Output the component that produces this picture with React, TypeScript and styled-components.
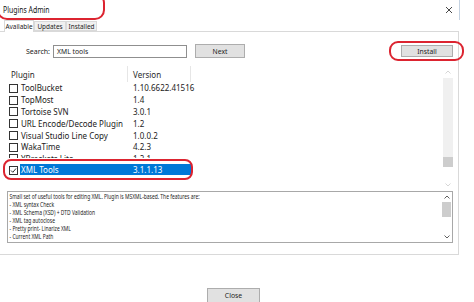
import styled, { createGlobalStyle } from "styled-components";

const GlobalStyle = createGlobalStyle`
    html, body {
        margin: 0;
        padding: 0;
        background: #ffffff;
    }
    body {
        font-family: "Noto Sans", "Open Sans", sans-serif;
        color: #1b1b1b;
    }
`;

const Window = styled.div`
    position: relative;
    width: 474px;
    height: 302px;
    overflow: hidden;
    background: #ffffff;
    display: flex;
    flex-direction: column;
`;

const TitleBar = styled.header`
    box-sizing: border-box;
    width: 460px;
    height: 20px;
    flex: none;
    display: flex;
    align-items: center;
    justify-content: space-between;
    padding: 0 7px 0 3px;
    border-right: 1px solid #c5d3e2;
`;

const Title = styled.h1`
    margin: 0;
    width: 48px;
    font-size: 8.6px;
    line-height: 10px;
    font-weight: 400;
    color: #111;
    white-space: nowrap;
    transform: scaleX(0.8);
    transform-origin: left center;
`;

const Marked = styled.div`
    position: relative;
    display: inline-flex;
`;

/* red hand-drawn highlight that lies over the screenshot */
const Ring = styled.span<{ $inset: string; $radius: number }>`
    position: absolute;
    inset: ${(p) => p.$inset};
    border: 2px solid #dc2430;
    border-radius: ${(p) => p.$radius}px;
    pointer-events: none;
`;

const TabStrip = styled.nav`
    display: flex;
    align-items: flex-end;
    height: 11px;
    padding-left: 4px;
    flex: none;
`;

const Tab = styled.div<{ $active?: boolean; $width: number }>`
    box-sizing: border-box;
    width: ${(p) => p.$width}px;
    height: ${(p) => (p.$active ? 12 : 10)}px;
    margin-bottom: ${(p) => (p.$active ? -1 : 0)}px;
    display: flex;
    align-items: center;
    justify-content: center;
    font-size: 6.4px;
    color: #222;
    white-space: nowrap;
    background: ${(p) => (p.$active ? "#ffffff" : "#f0f0f0")};
    border: 1px solid #d9d9d9;
    border-bottom: ${(p) => (p.$active ? "none" : "1px solid #d9d9d9")};
    z-index: ${(p) => (p.$active ? 1 : 0)};
`;

const Panel = styled.section`
    box-sizing: border-box;
    width: 459px;
    height: 224px;
    flex: none;
    display: flex;
    flex-direction: column;
    border-top: 1px solid #d9d9d9;
    border-right: 1px solid #d9d9d9;
    border-bottom: 1px solid #d9d9d9;
`;

const SearchRow = styled.div`
    display: flex;
    align-items: center;
    height: 14px;
    margin-top: 12px;
    padding-right: 5px;
`;

const Label = styled.label`
    width: 50px;
    text-align: right;
    margin-right: 3px;
    font-size: 7px;
`;

const Input = styled.div`
    box-sizing: border-box;
    width: 134px;
    height: 13px;
    border: 1px solid #8f8f8f;
    padding-left: 3px;
    font-size: 6.8px;
    display: flex;
    align-items: center;
`;

const Button = styled.button<{ $width: number; $height: number }>`
    box-sizing: border-box;
    width: ${(p) => p.$width}px;
    height: ${(p) => p.$height}px;
    padding: 0;
    margin: 0;
    background: #e1e1e1;
    border: 1px solid #adadad;
    font-family: inherit;
    font-size: 6.8px;
    color: #222;
    display: flex;
    align-items: center;
    justify-content: center;
`;

const Spacer = styled.div`
    flex: 1;
`;

const List = styled.div`
    display: flex;
    width: 450px;
    height: 124px;
    margin: 8px 0 0 5px;
`;

const Table = styled.div`
    flex: 1;
    display: flex;
    flex-direction: column;
    font-size: 8px;
`;

const HeaderRow = styled.div`
    display: grid;
    grid-template-columns: 123px 63px;
    height: 16px;
`;

const HeaderCell = styled.div<{ $pad: number }>`
    display: flex;
    align-items: center;
    padding-left: ${(p) => p.$pad}px;
    border-right: 1px solid #e6e6e6;
    color: #2a2a2a;
`;

const Row = styled.div<{ $clip?: number }>`
    display: grid;
    grid-template-columns: 15px 108px 63px;
    height: ${(p) => p.$clip ?? 11.8}px;
    align-items: ${(p) => (p.$clip ? "start" : "center")};
    overflow: hidden;
    flex: none;
`;

const Cell = styled.div<{ $selected?: boolean; $pad: number }>`
    height: 11px;
    line-height: 11px;
    padding-left: ${(p) => p.$pad}px;
    white-space: nowrap;
    background: ${(p) => (p.$selected ? "#0078d7" : "transparent")};
    color: ${(p) => (p.$selected ? "#ffffff" : "#1b1b1b")};
`;

const Check = styled.span`
    box-sizing: border-box;
    width: 9px;
    height: 9px;
    margin: 1px 0 0 4px;
    border: 1px solid #333;
    background: #fff;
    display: flex;
    align-items: center;
    justify-content: center;
`;

const ScrollColumn = styled.div<{ $width: number; $right: number }>`
    width: ${(p) => p.$width}px;
    margin-right: ${(p) => p.$right}px;
    display: flex;
    flex-direction: column;
    align-items: center;
`;

const Arrow = styled.div<{ $height: number; $faint?: boolean }>`
    height: ${(p) => p.$height}px;
    display: flex;
    align-items: center;
    justify-content: center;
    opacity: ${(p) => (p.$faint ? 0.25 : 1)};
`;

const Track = styled.div<{ $height: number; $bare?: boolean }>`
    width: 100%;
    height: ${(p) => p.$height}px;
    background: ${(p) => (p.$bare ? "transparent" : "#f0f0f0")};
    display: flex;
    flex-direction: column;
`;

const Thumb = styled.div<{ $top: number; $height: number }>`
    margin-top: ${(p) => p.$top}px;
    height: ${(p) => p.$height}px;
    background: #cdcdcd;
`;

const Description = styled.div`
    box-sizing: border-box;
    display: flex;
    width: 446px;
    height: 52px;
    margin: 1px 0 0 7px;
    border: 1px solid #a8a8a8;
    overflow: hidden;
`;

const DescText = styled.div`
    flex: 1;
    padding: 1px 0 0 2px;
    font-size: 6.6px;
    line-height: 8px;
    color: #1b1b1b;
    white-space: nowrap;
    transform: scaleX(0.75);
    transform-origin: left top;
`;

const Footer = styled.footer`
    display: flex;
    padding: 33px 0 0 207px;
`;

type Plugin = { name: string; version: string };

const plugins: Plugin[] = [
    { name: "ToolBucket", version: "1.10.6622.41516" },
    { name: "TopMost", version: "1.4" },
    { name: "Tortoise SVN", version: "3.0.1" },
    { name: "URL Encode/Decode Plugin", version: "1.2" },
    { name: "Visual Studio Line Copy", version: "1.0.0.2" },
    { name: "WakaTime", version: "4.2.3" },
];

const descLines = [
    "Small set of useful tools for editing XML. Plugin is MSXML-based. The features are:",
    "- XML syntax Check",
    "- XML Schema (XSD) + DTD Validation",
    "- XML tag autoclose",
    "- Pretty print- Linarize XML",
    "- Current XML Path",
];

function Chevron({ up }: { up?: boolean }) {
    return (
        <svg width="6" height="4" viewBox="0 0 6 4">
            <path d={up ? "M0.5 3.5 L3 1 L5.5 3.5" : "M0.5 0.5 L3 3 L5.5 0.5"} fill="none" stroke="#606060" strokeWidth="1" />
        </svg>
    );
}

export default function App() {
    return (
        <Window>
            <GlobalStyle />
            <TitleBar>
                <Marked>
                    <Title>Plugins Admin</Title>
                    <Ring $inset="-12px -54px -5px -6px" $radius={10} />
                </Marked>
                <svg width="6" height="6" viewBox="0 0 6 6">
                    <path d="M0 0 L6 6 M6 0 L0 6" stroke="#333" strokeWidth="0.9" />
                </svg>
            </TitleBar>

            <TabStrip>
                <Tab $active $width={30}>Available</Tab>
                <Tab $width={32}>Updates</Tab>
                <Tab $width={31}>Installed</Tab>
            </TabStrip>

            <Panel>
                <SearchRow>
                    <Label>Search:</Label>
                    <Input>XML tools</Input>
                    <Button $width={50} $height={14} style={{ marginLeft: 8 }}>
                        Next
                    </Button>
                    <Spacer />
                    <Marked>
                        <Button $width={52} $height={12}>Install</Button>
                        <Ring $inset="-4px -11px -4px -12px" $radius={9} />
                    </Marked>
                </SearchRow>

                <List>
                    <Table>
                        <HeaderRow>
                            <HeaderCell $pad={6}>Plugin</HeaderCell>
                            <HeaderCell $pad={5}>Version</HeaderCell>
                        </HeaderRow>
                        {plugins.map((plugin) => (
                            <Row key={plugin.name}>
                                <Check />
                                <Cell $pad={1}>{plugin.name}</Cell>
                                <Cell $pad={5}>{plugin.version}</Cell>
                            </Row>
                        ))}
                        <Row $clip={5}>
                            <Check />
                            <Cell $pad={1}>YBrackets Lite</Cell>
                            <Cell $pad={5}>1.2.1</Cell>
                        </Row>
                        <Marked style={{ marginTop: 6, width: 186 }}>
                            <Row>
                                <Check>
                                    <svg width="7" height="7" viewBox="0 0 7 7">
                                        <path d="M1 3.5 L2.8 5.3 L6 1.5" fill="none" stroke="#333" strokeWidth="1" />
                                    </svg>
                                </Check>
                                <Cell $selected $pad={1}>XML Tools</Cell>
                                <Cell $selected $pad={5}>3.1.1.13</Cell>
                            </Row>
                            <Ring $inset="-5px -2px -4px -2px" $radius={8} />
                        </Marked>
                    </Table>
                    <ScrollColumn $width={10} $right={2}>
                        <Arrow $height={12} $faint>
                            <Chevron up />
                        </Arrow>
                        <Track $height={89}>
                            <Thumb $top={79} $height={10} />
                        </Track>
                        <Spacer />
                        <Arrow $height={10} $faint>
                            <Chevron />
                        </Arrow>
                    </ScrollColumn>
                </List>

                <Description>
                    <DescText>
                        {descLines.map((line) => (
                            <div key={line}>{line}</div>
                        ))}
                    </DescText>
                    <ScrollColumn $width={9} $right={1}>
                        <Arrow $height={10}>
                            <Chevron up />
                        </Arrow>
                        <Track $height={15} $bare>
                            <Thumb $top={0} $height={15} />
                        </Track>
                        <Spacer />
                        <Arrow $height={10}>
                            <Chevron />
                        </Arrow>
                    </ScrollColumn>
                </Description>
            </Panel>

            <Footer>
                <Button $width={53} $height={15}>Close</Button>
            </Footer>
        </Window>
    );
}
